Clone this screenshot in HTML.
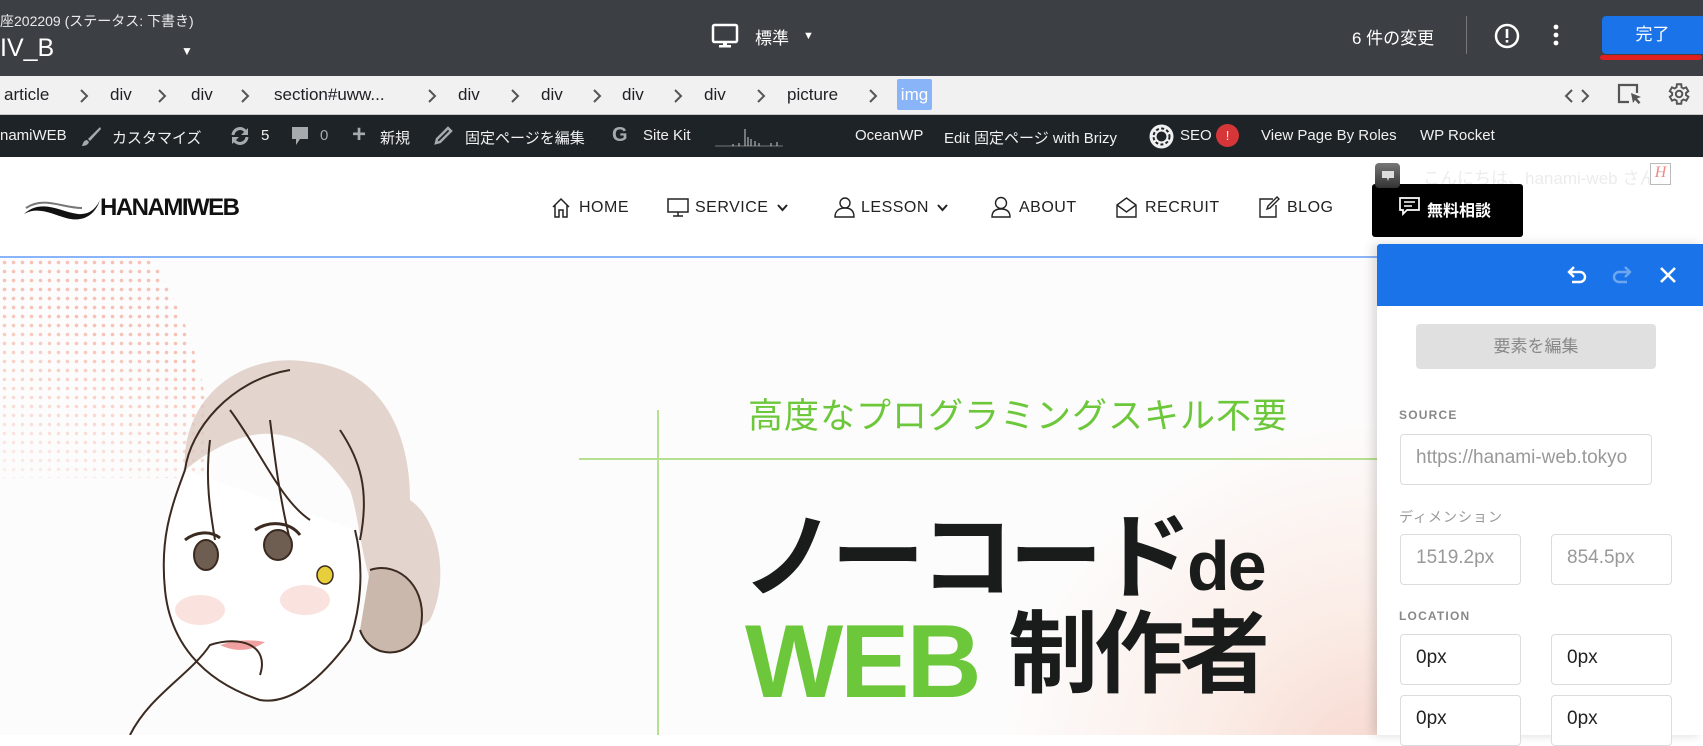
<!DOCTYPE html>
<html><head><meta charset="utf-8">
<style>
*{margin:0;padding:0;box-sizing:border-box}
body{width:1703px;height:735px;overflow:hidden;position:relative;background:#fff;font-family:"Liberation Sans","Noto Sans CJK JP",sans-serif}
.a{position:absolute;white-space:nowrap}
#top{left:0;top:0;width:1703px;height:76px;background:#3c3f43;color:#fff}
#bc{left:0;top:76px;width:1703px;height:39px;background:#f1f1f2;color:#202124;font-size:17px;border-bottom:1px solid #c8c8c8}
#bc .a{top:9px}
#bc svg.c{position:absolute;top:12px}
#wp{left:0;top:115px;width:1703px;height:42px;background:#1d2327;color:#f0f0f1;font-size:15px}
#wp .a{top:12px}
.nav{font-size:16px;color:#222;top:199px;letter-spacing:.5px}
#panel{left:1377px;top:244px;width:326px;height:491px;background:#fff;box-shadow:-4px 0 10px rgba(0,0,0,.15)}
.inp{position:absolute;border:1px solid #dadce0;border-radius:4px;background:#fff;font-size:19px;color:#999;padding:12px 0 0 15px}
.lbl{position:absolute;font-size:12px;color:#888;letter-spacing:1.2px;font-weight:bold}
</style></head><body>

<div id="top" class="a">
  <div class="a" style="left:0;top:11px;font-size:14px;color:#e8eaed">座202209 (ステータス: 下書き)</div>
  <div class="a" style="left:0;top:34px;font-size:25px">IV_B</div>
  <div class="a" style="left:181px;top:44px;font-size:12px">▼</div>
  <svg class="a" style="left:711px;top:23px" width="28" height="26" viewBox="0 0 28 26"><rect x="2" y="2" width="24" height="17" rx="1.5" fill="none" stroke="#fff" stroke-width="2.5"/><rect x="12" y="19" width="4" height="4" fill="#fff"/><rect x="8" y="22" width="12" height="2.5" fill="#fff"/></svg>
  <div class="a" style="left:755px;top:24px;font-size:17px">標準</div>
  <div class="a" style="left:803px;top:30px;font-size:11px">▼</div>
  <div class="a" style="left:1352px;top:24px;font-size:17px">6 件の変更</div>
  <div class="a" style="left:1466px;top:16px;width:1px;height:38px;background:#777"></div>
  <svg class="a" style="left:1494px;top:23px" width="26" height="26"><circle cx="13" cy="13" r="11" fill="none" stroke="#fff" stroke-width="2.5"/><rect x="11.7" y="6" width="2.6" height="9" fill="#fff"/><rect x="11.7" y="17" width="2.6" height="2.6" fill="#fff"/></svg>
  <svg class="a" style="left:1553px;top:24px" width="6" height="24"><circle cx="3" cy="3" r="2.4" fill="#fff"/><circle cx="3" cy="11" r="2.4" fill="#fff"/><circle cx="3" cy="19" r="2.4" fill="#fff"/></svg>
  <div class="a" style="left:1602px;top:16px;width:101px;height:38px;background:#1a73e8;border-radius:4px 0 0 4px;font-size:17px;text-align:center;line-height:38px">完了</div>
  <div class="a" style="left:1600px;top:55px;width:102px;height:5px;background:#e0201f;border-radius:3px"></div>
</div>

<div id="bc" class="a">
  <div class="a" style="left:4px">article</div>
  <svg class="c" style="left:79px" width="10" height="16"><path d="M2 2l6 6-6 6" fill="none" stroke="#555" stroke-width="2"/></svg>
  <div class="a" style="left:110px">div</div>
  <svg class="c" style="left:157px" width="10" height="16"><path d="M2 2l6 6-6 6" fill="none" stroke="#555" stroke-width="2"/></svg>
  <div class="a" style="left:191px">div</div>
  <svg class="c" style="left:240px" width="10" height="16"><path d="M2 2l6 6-6 6" fill="none" stroke="#555" stroke-width="2"/></svg>
  <div class="a" style="left:274px">section#uww...</div>
  <svg class="c" style="left:427px" width="10" height="16"><path d="M2 2l6 6-6 6" fill="none" stroke="#555" stroke-width="2"/></svg>
  <div class="a" style="left:458px">div</div>
  <svg class="c" style="left:510px" width="10" height="16"><path d="M2 2l6 6-6 6" fill="none" stroke="#555" stroke-width="2"/></svg>
  <div class="a" style="left:541px">div</div>
  <svg class="c" style="left:592px" width="10" height="16"><path d="M2 2l6 6-6 6" fill="none" stroke="#555" stroke-width="2"/></svg>
  <div class="a" style="left:622px">div</div>
  <svg class="c" style="left:673px" width="10" height="16"><path d="M2 2l6 6-6 6" fill="none" stroke="#555" stroke-width="2"/></svg>
  <div class="a" style="left:704px">div</div>
  <svg class="c" style="left:756px" width="10" height="16"><path d="M2 2l6 6-6 6" fill="none" stroke="#555" stroke-width="2"/></svg>
  <div class="a" style="left:787px">picture</div>
  <svg class="c" style="left:868px" width="10" height="16"><path d="M2 2l6 6-6 6" fill="none" stroke="#555" stroke-width="2"/></svg>
  <div class="a" style="left:897px;top:3px;width:35px;height:31px;background:#8ab4f8;color:#fff;text-align:center;line-height:31px;border-radius:2px">img</div>
  <svg class="c" style="left:1564px" width="26" height="16"><path d="M8 2L2 8l6 6M18 2l6 6-6 6" fill="none" stroke="#555" stroke-width="2"/></svg>
  <svg class="a" style="left:1616px;top:6px" width="28" height="26"><path d="M13 20H3V3h18v8" fill="none" stroke="#555" stroke-width="2.2"/><path d="M15 11l10 4-4 1.5 3.5 4-2 1.5-3.5-4-2 3z" fill="#555"/></svg>
  <svg class="a" style="left:1665px;top:5px" width="26" height="26" viewBox="0 0 24 24"><path d="M19.4 13a7.5 7.5 0 0 0 0-2l2.1-1.6-2-3.5-2.5 1a7.6 7.6 0 0 0-1.7-1L15 3h-4l-.4 2.9a7.6 7.6 0 0 0-1.7 1l-2.5-1-2 3.5L6.6 11a7.5 7.5 0 0 0 0 2l-2.1 1.6 2 3.5 2.5-1a7.6 7.6 0 0 0 1.7 1L11 21h4l.4-2.9a7.6 7.6 0 0 0 1.7-1l2.5 1 2-3.5z" fill="none" stroke="#555" stroke-width="1.8"/><circle cx="13" cy="12" r="3" fill="none" stroke="#555" stroke-width="1.8"/></svg>
</div>

<div id="wp" class="a">
  <div class="a" style="left:0">namiWEB</div>
  <svg class="a" style="left:80px;top:10px" width="22" height="22"><path d="M20 2L8 14l2 2L21 4z M7 15c-3 0-4 3-5 6 3 0 6-1 7-4z" fill="#a7aaad"/></svg>
  <div class="a" style="left:112px">カスタマイズ</div>
  <svg class="a" style="left:229px;top:11px" width="22" height="20"><path d="M4 9a7 7 0 0 1 13-3M18 11a7 7 0 0 1-13 3" fill="none" stroke="#a7aaad" stroke-width="3"/><path d="M19 2v7h-7zM3 18v-7h7z" fill="#a7aaad"/></svg>
  <div class="a" style="left:261px">5</div>
  <svg class="a" style="left:291px;top:11px" width="18" height="22"><path d="M1 1h16v12h-8l-4 6v-6H1z" fill="#a7aaad"/></svg>
  <div class="a" style="left:320px;color:#a7aaad">0</div>
  <div class="a" style="left:352px;top:6px;font-size:24px;font-weight:bold;color:#a7aaad">+</div>
  <div class="a" style="left:380px">新規</div>
  <svg class="a" style="left:433px;top:11px" width="20" height="20"><path d="M15 2l3 3L7 16l-4 1 1-4z" fill="none" stroke="#a7aaad" stroke-width="2.5"/></svg>
  <div class="a" style="left:465px">固定ページを編集</div>
  <div class="a" style="left:612px;top:9px;font-size:20px;font-weight:bold;color:#a7aaad">G</div>
  <div class="a" style="left:643px">Site Kit</div>
  <svg class="a" style="left:715px;top:12px" width="68" height="20"><path d="M0 19h68" stroke="#777" stroke-width="1"/><path d="M30 19V2M33 19V10M36 19V12M40 19V14M44 19V16M24 19V16M18 19V17M56 19V16M62 19V15" stroke="#ccc" stroke-width="1"/></svg>
  <div class="a" style="left:855px">OceanWP</div>
  <div class="a" style="left:944px">Edit 固定ページ with Brizy</div>
  <svg class="a" style="left:1149px;top:9px" width="25" height="25"><circle cx="12.5" cy="12.5" r="12" fill="#f0f0f1"/><circle cx="12.5" cy="12.5" r="5" fill="#1d2327"/><circle cx="12.5" cy="12.5" r="8" fill="none" stroke="#1d2327" stroke-width="2" stroke-dasharray="3 2.3"/></svg>
  <div class="a" style="left:1180px">SEO</div>
  <div class="a" style="left:1216px;top:9px;width:23px;height:23px;border-radius:50%;background:#d63638;text-align:center;line-height:23px;font-size:13px">!</div>
  <div class="a" style="left:1261px">View Page By Roles</div>
  <div class="a" style="left:1420px">WP Rocket</div>
</div>

<!-- site header -->
<svg class="a" style="left:22px;top:192px" width="80" height="32"><path d="M2 22C20 6 38 20 56 22 68 23 74 16 78 8 72 26 58 30 44 26 30 22 16 14 2 22z" fill="#111"/><path d="M4 16C22 4 40 16 60 16" fill="none" stroke="#777" stroke-width="2"/></svg>
<div class="a" style="left:100px;top:194px;font-size:24px;font-weight:bold;color:#111;letter-spacing:-1.5px">HANAMIWEB</div>

<svg class="a" style="left:551px;top:197px" width="20" height="22"><path d="M2 10L10 2l8 8M4 8v12h4v-7h4v7h4V8" fill="none" stroke="#222" stroke-width="1.5"/></svg>
<div class="a nav" style="left:579px">HOME</div>
<svg class="a" style="left:667px;top:198px" width="22" height="20"><rect x="1" y="1" width="20" height="13" fill="none" stroke="#222" stroke-width="1.5"/><path d="M11 14v4M6 18h10" stroke="#222" stroke-width="1.5"/></svg>
<div class="a nav" style="left:695px">SERVICE</div>
<svg class="a" style="left:777px;top:204px" width="11" height="8"><path d="M1 1l4.5 5L10 1" fill="none" stroke="#222" stroke-width="2"/></svg>
<svg class="a" style="left:833px;top:196px" width="22" height="22"><circle cx="12" cy="7" r="5" fill="none" stroke="#222" stroke-width="1.4"/><path d="M2 21c0-6 4-9 10-9s9 3 9 9z" fill="none" stroke="#222" stroke-width="1.4"/></svg>
<div class="a nav" style="left:861px">LESSON</div>
<svg class="a" style="left:937px;top:204px" width="11" height="8"><path d="M1 1l4.5 5L10 1" fill="none" stroke="#222" stroke-width="2"/></svg>
<svg class="a" style="left:991px;top:196px" width="20" height="22"><circle cx="10" cy="7" r="5.5" fill="none" stroke="#222" stroke-width="1.4"/><path d="M1 21c0-6 4-8 9-8s9 2 9 8z" fill="none" stroke="#222" stroke-width="1.4"/></svg>
<div class="a nav" style="left:1019px">ABOUT</div>
<svg class="a" style="left:1116px;top:196px" width="21" height="22"><path d="M1 9l9.5-7 9.5 7v12H1zM1 9l9.5 7 9.5-7" fill="none" stroke="#222" stroke-width="1.4"/></svg>
<div class="a nav" style="left:1145px">RECRUIT</div>
<svg class="a" style="left:1259px;top:196px" width="21" height="22"><path d="M14 3H1v18h16V9" fill="none" stroke="#222" stroke-width="1.4"/><path d="M18 1l2 2-9 9-3 1 1-3z" fill="none" stroke="#222" stroke-width="1.4"/></svg>
<div class="a nav" style="left:1287px">BLOG</div>

<div class="a" style="left:1423px;top:164px;font-size:17px;color:#ececec">こんにちは、hanami-web さん</div>
<div class="a" style="left:1650px;top:163px;width:21px;height:22px;border:1px solid #bbb;color:#e88;font-size:16px;text-align:center;font-style:italic;font-family:'Liberation Serif',serif;background:#fff">H</div>
<div class="a" style="left:1372px;top:184px;width:151px;height:53px;background:#000;border-radius:3px"></div>
<div class="a" style="left:1375px;top:163px;width:25px;height:25px;border-radius:4px;background:linear-gradient(#777,#333)"></div>
<svg class="a" style="left:1381px;top:170px" width="14" height="12"><path d="M1 1h12v7H8l-1 3-1-3H1z" fill="#ddd"/></svg>
<svg class="a" style="left:1399px;top:197px" width="21" height="19"><path d="M1 1h19v12H8l-4 4v-4H1z" fill="none" stroke="#fff" stroke-width="1.7"/><path d="M5 5h11M5 9h8" stroke="#fff" stroke-width="1.5"/></svg>
<div class="a" style="left:1427px;top:197px;font-size:16px;font-weight:bold;color:#fff">無料相談</div>

<!-- hero -->
<div class="a" style="left:0;top:257px;width:1377px;height:478px;background:radial-gradient(ellipse 380px 360px at 1380px 520px,#f6d6cc 0%,#fbece6 45%,rgba(255,255,255,0) 100%),#fdfcfc"></div>
<div class="a" style="left:0;top:258px;width:230px;height:220px;background-image:radial-gradient(circle,#f7c2b6 1.6px,transparent 2px);background-size:9px 9px;clip-path:circle(370px at -160px 200px);-webkit-mask-image:linear-gradient(200deg,#000 40%,rgba(0,0,0,.2));mask-image:linear-gradient(200deg,#000 40%,rgba(0,0,0,.2))"></div>
<div class="a" style="left:0;top:256px;width:1377px;height:2px;background:#8ab4f8"></div>

<!-- girl illustration -->
<svg class="a" style="left:110px;top:340px" width="360" height="395" viewBox="0 0 360 395">
  <path d="M75 130C70 60 130 10 200 22 270 30 300 90 300 160 330 180 340 240 320 280 300 300 280 290 270 270 250 220 250 180 240 150 200 90 150 70 75 130z" fill="#d9c8bf" opacity=".75"/>
  <path d="M75 130C60 170 50 200 55 250 60 300 90 340 150 360 180 365 210 340 240 300 250 270 255 230 245 190" fill="#fff" stroke="#3b2a20" stroke-width="2"/>
  <path d="M75 130C80 90 120 40 180 30M120 70C150 110 170 160 200 180M160 80C165 120 170 160 180 200M100 100C95 140 100 170 105 200M230 90C250 120 260 150 250 200" fill="none" stroke="#3b2a20" stroke-width="2"/>
  <path d="M260 230c30-10 60 20 50 60-10 30-50 30-60 0" fill="#cbb8ad" stroke="#3b2a20" stroke-width="2"/>
  <ellipse cx="96" cy="215" rx="12" ry="15" fill="#6e5e52" stroke="#3b2a20" stroke-width="2"/>
  <ellipse cx="168" cy="205" rx="14" ry="15" fill="#6e5e52" stroke="#3b2a20" stroke-width="2"/>
  <path d="M75 200c10-8 25-10 35-2M145 190c15-10 35-8 45 5" fill="none" stroke="#3b2a20" stroke-width="3"/>
  <ellipse cx="215" cy="235" rx="8" ry="9" fill="#e7cf3c" stroke="#3b2a20" stroke-width="1.5"/>
  <path d="M110 305c15-5 30-6 45-3-15 10-30 10-45 3z" fill="#f0a0a0"/>
  <ellipse cx="90" cy="270" rx="25" ry="15" fill="#f7cfc9" opacity=".6"/>
  <ellipse cx="195" cy="260" rx="25" ry="15" fill="#f7cfc9" opacity=".6"/>
  <path d="M20 395c20-40 60-60 80-90 30-10 60 0 50 30" fill="none" stroke="#3b2a20" stroke-width="2"/>
</svg>

<div class="a" style="left:657px;top:410px;width:2px;height:325px;background:#b5e08f"></div>
<div class="a" style="left:579px;top:458px;width:800px;height:2px;background:#b5e08f"></div>
<div class="a" style="left:748px;top:388px;font-size:35px;color:#6cc83a;letter-spacing:1px">高度なプログラミングスキル不要</div>
<div class="a" style="left:742px;top:511px;font-size:94px;font-weight:bold;color:#1a1c1c;letter-spacing:-5px;line-height:1">ノーコード<span style="font-family:'Liberation Sans',sans-serif;font-size:70px;letter-spacing:-2px">de</span></div>
<div class="a" style="left:745px;top:610px;font-size:104px;font-weight:bold;color:#6cc83a;line-height:1;letter-spacing:-3px;font-family:'Liberation Sans',sans-serif">WEB</div>
<div class="a" style="left:1008px;top:610px;font-size:90px;font-weight:bold;color:#1a1c1c;line-height:1;letter-spacing:-4px">制作者</div>

<!-- panel -->
<div id="panel" class="a">
  <div class="a" style="left:0;top:0;width:326px;height:62px;background:#1a73e8;border-radius:3px 0 0 0"></div>
  <svg class="a" style="left:189px;top:21px" width="22" height="20"><path d="M4 7h10a5 5 0 0 1 0 10H6" fill="none" stroke="#fff" stroke-width="2.4"/><path d="M8 2L3 7l5 5" fill="none" stroke="#fff" stroke-width="2.4"/></svg>
  <svg class="a" style="left:234px;top:21px" width="22" height="20"><path d="M18 7H8a5 5 0 0 0 0 10h8" fill="none" stroke="#6ea6f0" stroke-width="2.4"/><path d="M14 2l5 5-5 5" fill="none" stroke="#6ea6f0" stroke-width="2.4"/></svg>
  <svg class="a" style="left:282px;top:22px" width="18" height="18"><path d="M2 2l14 14M16 2L2 16" stroke="#fff" stroke-width="2.6"/></svg>
  <div class="a" style="left:39px;top:80px;width:240px;height:45px;background:#e0e0e0;border-radius:4px;text-align:center;line-height:45px;color:#888;font-size:17px">要素を編集</div>
  <div class="lbl" style="left:22px;top:164px">SOURCE</div>
  <div class="inp" style="left:23px;top:190px;width:252px;height:51px;overflow:hidden">https://hanami-web.tokyo</div>
  <div class="a" style="left:22px;top:263px;font-size:14px;color:#999;letter-spacing:1px">ディメンション</div>
  <div class="inp" style="left:23px;top:290px;width:121px;height:51px">1519.2px</div>
  <div class="inp" style="left:174px;top:290px;width:121px;height:51px">854.5px</div>
  <div class="lbl" style="left:22px;top:365px">LOCATION</div>
  <div class="inp" style="left:23px;top:390px;width:121px;height:51px;color:#222">0px</div>
  <div class="inp" style="left:174px;top:390px;width:121px;height:51px;color:#222">0px</div>
  <div class="inp" style="left:23px;top:451px;width:121px;height:51px;color:#222">0px</div>
  <div class="inp" style="left:174px;top:451px;width:121px;height:51px;color:#222">0px</div>
</div>
</body></html>
